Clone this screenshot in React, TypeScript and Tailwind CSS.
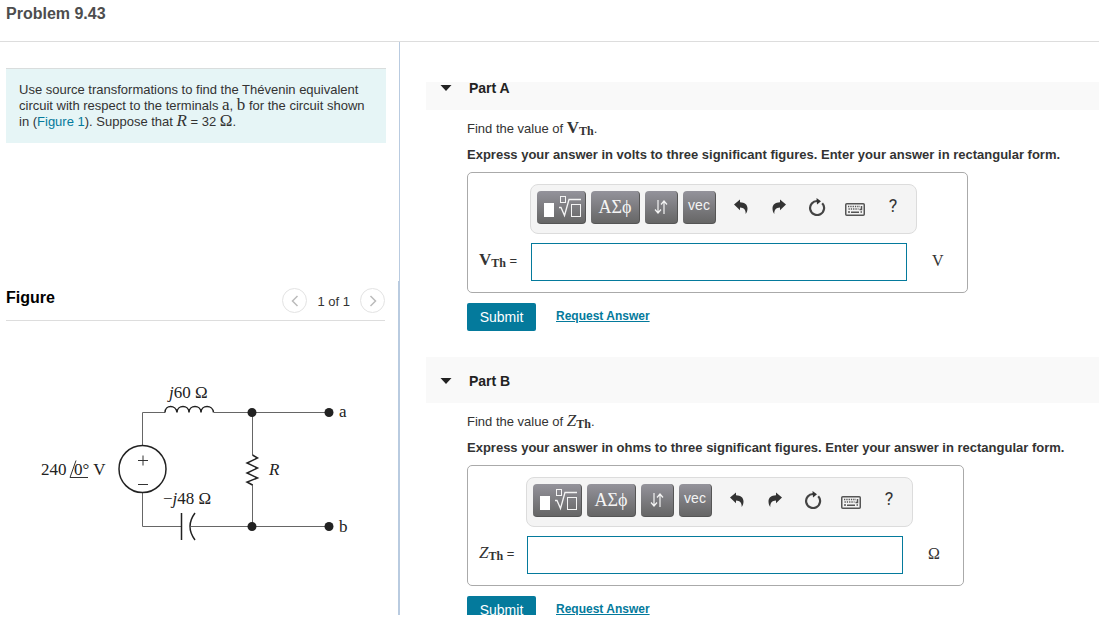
import React from 'react';

interface SymbolProps {
  base: string;
  italic?: boolean;
}

interface PartProps {
  title: string;
  base: string;
  italic?: boolean;
  instruction: string;
  unit: string;
  labelWidth: string;
}

const SERIF = "font-['Liberation_Serif',serif]";

const MathSymbol: React.FC<SymbolProps> = ({ base, italic }) => (
  <span className="font-['Liberation_Serif',serif] leading-0">
    <span className={italic ? 'text-[17px] italic' : 'text-[17px] font-bold'}>{base}</span>
    <span className="relative top-0.5 text-xs font-bold">Th</span>
  </span>
);

const TemplateIcon = () => (
  <svg width="40" height="24" viewBox="0 0 40 24" fill="none" stroke="#f4f4f4" aria-hidden="true">
    <rect x="3" y="8" width="10" height="14" fill="#fff" stroke="none" />
    <rect x="19.500" y="1.500" width="5" height="6" />
    <path d="M18 12.500h2l3.500 8L28 4.500h12" strokeWidth="1.300" />
    <rect x="30.500" y="9.500" width="9" height="12" />
  </svg>
);

const ArrowsIcon = () => (
  <svg width="14" height="16" viewBox="0 0 14 16" fill="none" stroke="#f4f4f4" strokeWidth="1.200" aria-hidden="true">
    <path d="M4 1v13M1 10.500l3 3.500 3-3.500M10 15V2M7 5.500L10 2l3 3.500" />
  </svg>
);

const UndoIcon = () => (
  <svg width="14" height="16" viewBox="0 0 14 16" fill="#333" aria-hidden="true">
    <path d="M0 5.500L6 .5v2.800c4.800.2 7.500 2.400 7.500 6.200 0 2-.6 3.900-1.800 5.500.2-4-1.600-6.300-5.700-6.400v2.700z" />
  </svg>
);

const RedoIcon = () => (
  <svg width="14" height="16" viewBox="0 0 14 16" fill="#333" aria-hidden="true">
    <path d="M14 5.500L8 .5v2.800C3.200 3.500.5 5.700.5 9.500c0 2 .6 3.900 1.800 5.500-.2-4 1.600-6.300 5.700-6.400v2.700z" />
  </svg>
);

const ResetIcon = () => (
  <svg width="18" height="18" viewBox="0 0 18 18" fill="none" aria-hidden="true">
    <path d="M14.200 5.200A7 7 0 1 1 9.500 3" stroke="#444" strokeWidth="2.200" />
    <path d="M8.500 0l4.500 3.200-4 3.300z" fill="#333" />
  </svg>
);

const KeyboardIcon = () => (
  <svg width="20" height="13" viewBox="0 0 20 13" fill="none" stroke="#555" aria-hidden="true">
    <rect x=".75" y=".75" width="18.500" height="11.500" rx="1" strokeWidth="1.500" />
    <path d="M3 3.500h12M3.500 6h10" strokeDasharray="1.300 1" strokeWidth="1.300" />
    <path d="M16.500 3v3.500h-2M3 9h2M6 9.300h8M15.500 9h1.500" strokeWidth="1.500" />
  </svg>
);

const KEY =
  'flex h-[33px] items-center justify-center rounded-[4px] border-r border-b border-[#555] bg-linear-to-b from-[#94939b] to-[#666] text-[#f4f4f4]';
const TOOL = 'flex h-[31px] w-[38px] items-center justify-center';

const Toolbar = () => (
  <div className="flex h-[50px] w-[387px] items-start rounded-lg border border-[#dcdcdc] bg-[#f4f4f4] px-1.5 pt-1.5">
    <div className="flex gap-[5px]">
      <button type="button" aria-label="Templates" className={`${KEY} w-[49px]`}>
        <TemplateIcon />
      </button>
      <button type="button" className={`${KEY} ${SERIF} w-[49px] text-lg`}>
        ΑΣϕ
      </button>
      <button type="button" aria-label="Subscript and superscript" className={`${KEY} w-[33px]`}>
        <ArrowsIcon />
      </button>
      <button type="button" className={`${KEY} w-[33px] pb-1 text-sm`}>
        vec
      </button>
    </div>
    <div className="ml-1.5 flex">
      <button type="button" aria-label="Undo" className={TOOL}>
        <UndoIcon />
      </button>
      <button type="button" aria-label="Redo" className={TOOL}>
        <RedoIcon />
      </button>
      <button type="button" aria-label="Reset" className={TOOL}>
        <ResetIcon />
      </button>
      <button type="button" aria-label="Keyboard shortcuts" className={`${TOOL} pt-1.5`}>
        <KeyboardIcon />
      </button>
      <button type="button" aria-label="Help" className={`${TOOL} pb-0.5 font-['Roboto',sans-serif] text-lg text-[#333]`}>
        ?
      </button>
    </div>
  </div>
);

const Part: React.FC<PartProps> = ({ title, base, italic, instruction, unit, labelWidth }) => {
  const inputId = `answer-${base}`;

  return (
    <section className="mb-[26px]">
      <header className="flex h-[46px] items-center bg-[#f9f9f9] pt-px pl-3.5">
        <button type="button" className="flex items-center gap-[17px] text-sm leading-4 font-bold text-[#222]">
          <svg width="12" height="6" viewBox="0 0 12 6" fill="#222" aria-hidden="true">
            <path d="M.5 0h11L6 6z" />
          </svg>
          {title}
        </button>
      </header>

      <div className="pl-[41px]">
        <p className="mt-[11px] h-4 whitespace-nowrap">
          Find the value of <MathSymbol base={base} italic={italic} />.
        </p>
        <p className="mt-2.5 font-bold leading-4">{instruction}</p>

        <div className="mt-[9px] flex h-[121px] w-fit rounded-[5px] border border-[#aaa] pl-[11px]">
          <label htmlFor={inputId} className={`${labelWidth} shrink-0 pt-20 leading-4 whitespace-nowrap`}>
            <MathSymbol base={base} italic={italic} /> =
          </label>
          <div className="flex flex-col gap-[9px] pt-[11px]">
            <Toolbar />
            <div className="flex items-center pl-px">
              <input
                id={inputId}
                type="text"
                className="h-[38px] w-[376px] border border-[#047a9c] bg-white px-2 text-base outline-none"
              />
              <span className="ml-[25px] w-[35px] pb-0.5 font-['Liberation_Serif',serif] text-base">{unit}</span>
            </div>
          </div>
        </div>

        <div className="mt-2.5 flex gap-5">
          <button type="button" className="h-7 w-[69px] rounded-[2px] bg-[#047a9c] text-sm text-white">
            Submit
          </button>
          <a href="#" className="mt-1 text-xs leading-[18px] font-bold text-[#047a9c] underline">
            Request Answer
          </a>
        </div>
      </div>
    </section>
  );
};

const Circuit = () => (
  <svg
    width="340"
    height="180"
    viewBox="0 0 340 180"
    fill="none"
    stroke="#333"
    role="img"
    aria-label="Circuit diagram"
    className="mt-[49px] ml-[30px] font-['Liberation_Serif',serif] text-[17px]"
  >
    <path d="M112.500 75V42.500H135M184 42.500h115M112.500 123v33.500H151M161 156.500h138M222.500 42.500V85M222.500 114v42.500" stroke="#666" />
    <path
      d="M135 42.500c0-8 11-8 12 0c0-8 12-8 12 0c0-8 12-8 12 0c0-8 12-8 12.500 0"
      stroke="#222"
      strokeWidth="1.500"
    />
    <path d="M222.500 85l5 3-10.500 5 10.500 5-10.500 5 10.500 5-10.500 4 5.500 3" stroke="#222" strokeWidth="1.500" />
    <circle cx="112.500" cy="99" r="23.500" stroke="#222" strokeWidth="1.500" />
    <path d="M108 90.500h10M113 85.500v10M108 114.500h10" />
    <path d="M151.500 143v27M165 143q-10 13.500 0 27" stroke="#222" strokeWidth="1.500" />
    <path d="M40 107.500h18M40 107.500l6-17" />
    <g fill="#222" stroke="none">
      <circle cx="222" cy="42.500" r="4.500" />
      <circle cx="299" cy="42.500" r="4.500" />
      <circle cx="222" cy="156.500" r="4.500" />
      <circle cx="299" cy="156.500" r="4.500" />
      <text x="139" y="28">
        <tspan fontStyle="italic">j</tspan>60 Ω
      </text>
      <text x="133" y="134">
        −<tspan fontStyle="italic">j</tspan>48 Ω
      </text>
      <text x="11" y="105">240</text>
      <text x="44" y="105">0° V</text>
      <text x="239" y="105" fontStyle="italic">
        R
      </text>
      <text x="309" y="47">a</text>
      <text x="309" y="162">b</text>
    </g>
  </svg>
);

const Chevron: React.FC<{ path: string }> = ({ path }) => (
  <svg width="8" height="12" viewBox="0 0 8 12" fill="none" stroke="#bbb" strokeWidth="1.500" aria-hidden="true">
    <path d={path} />
  </svg>
);

const App: React.FC = () => {
  return (
    <div className="flex h-screen flex-col overflow-hidden bg-white pb-[18px] font-['Liberation_Sans',Arial,sans-serif] text-[13px] leading-4 text-[#333]">
      <header className="h-[42px] shrink-0 border-b border-[#ddd] pt-1 pl-1.5">
        <h1 className="text-base leading-5 font-bold text-[#4d4d4d]">Problem 9.43</h1>
      </header>

      <div className="flex min-h-0 flex-1">
        <aside className="flex w-[400px] shrink-0 flex-col">
          <div className="h-[239px] shrink-0 border-r border-[#b9cbe0] pt-[26px] pr-[13px] pl-1.5">
            <p className="border-t border-[#d9dddd] bg-[#e6f5f6] p-[13px]">
              Use source transformations to find the Thévenin equivalent circuit with respect to the terminals{' '}
              <span className="font-['Liberation_Serif',serif] text-[17px] leading-0">a</span>,{' '}
              <span className="font-['Liberation_Serif',serif] text-[17px] leading-0">b</span> for the circuit shown in (
              <a href="#figure" className="text-[#047a9c]">
                Figure 1
              </a>
              ). Suppose that{' '}
              <span className="font-['Liberation_Serif',serif] text-[17px] leading-0 italic">R</span> = 32{' '}
              <span className="font-['Liberation_Serif',serif] text-[17px] leading-0">Ω</span>.
            </p>
          </div>

          <div id="figure" className="min-h-0 flex-1 overflow-hidden border-r-2 border-[#b9cbe0] pr-[13px]">
            <div className="ml-1.5 flex h-10 items-start justify-between border-b border-[#ddd] pt-[7px]">
              <h2 className="text-base leading-5 font-bold text-black">Figure</h2>
              <div className="flex items-center gap-2.5">
                <button
                  type="button"
                  aria-label="Previous figure"
                  className="flex size-[25px] items-center justify-center rounded-full border border-[#e3e3e3]"
                >
                  <Chevron path="M6.500 1L1.500 6l5 5" />
                </button>
                <span className="pt-0.5 leading-4">1 of 1</span>
                <button
                  type="button"
                  aria-label="Next figure"
                  className="flex size-[25px] items-center justify-center rounded-full border border-[#e3e3e3]"
                >
                  <Chevron path="M1.500 1l5 5-5 5" />
                </button>
              </div>
            </div>
            <Circuit />
          </div>
        </aside>

        <main className="min-w-0 flex-1 pt-10 pl-[26px]">
          <div className="h-full overflow-hidden">
            <div className="-mt-[18px]">
              <Part
                title="Part A"
                base="V"
                instruction="Express your answer in volts to three significant figures. Enter your answer in rectangular form."
                unit="V"
                labelWidth="w-[51px]"
              />
              <Part
                title="Part B"
                base="Z"
                italic
                instruction="Express your answer in ohms to three significant figures. Enter your answer in rectangular form."
                unit="Ω"
                labelWidth="w-[47px]"
              />
            </div>
          </div>
        </main>
      </div>
    </div>
  );
};

export default App;
